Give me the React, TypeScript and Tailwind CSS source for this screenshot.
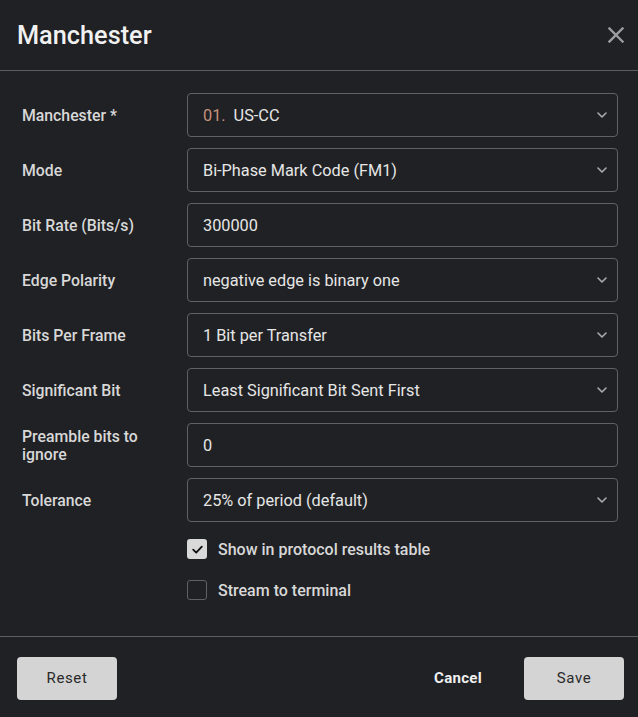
import React from "react";

const Chevron = () => (
  <svg width="10" height="6" viewBox="0 0 10 6" className="shrink-0">
    <path d="M1 1l4 4 4-4" fill="none" stroke="#a9abae" strokeWidth="1.6" strokeLinecap="round" strokeLinejoin="round" />
  </svg>
);

type Row = { label: React.ReactNode; value: React.ReactNode; select: boolean };

const rows: Row[] = [
  {
    label: "Manchester *",
    value: (
      <>
        <span className="text-[#c8917c] mr-[8px]">01.</span>US-CC
      </>
    ),
    select: true,
  },
  { label: "Mode", value: "Bi-Phase Mark Code (FM1)", select: true },
  { label: "Bit Rate (Bits/s)", value: "300000", select: false },
  { label: "Edge Polarity", value: "negative edge is binary one", select: true },
  { label: "Bits Per Frame", value: "1 Bit per Transfer", select: true },
  { label: "Significant Bit", value: "Least Significant Bit Sent First", select: true },
  { label: "Preamble bits to ignore", value: "0", select: false },
  { label: "Tolerance", value: "25% of period (default)", select: true },
];

export default function App() {
  return (
    <div
      className="w-[638px] h-[717px] bg-[#202124] flex flex-col text-[#e3e3e3]"
      style={{ fontFamily: "Roboto, 'Noto Sans', sans-serif" }}
    >
      <div className="h-[71px] shrink-0 flex items-center justify-between pl-[17px] pr-[14px] border-b border-[#5c5e62]">
        <div className="text-[25.3px] font-medium text-[#f1f1f1] leading-none mt-[1px]">Manchester</div>
        <svg width="16" height="16" viewBox="0 0 16 16" className="mt-[-1px]">
          <path d="M1.5 1.5l13 13M14.5 1.5l-13 13" stroke="#9c9da0" strokeWidth="2.4" strokeLinecap="square" />
        </svg>
      </div>
      <div className="flex-1 flex flex-col pt-[22px] pl-[22px] pr-[20px]">
        <div className="flex flex-col gap-[11px]">
          {rows.map((r, i) => (
            <div key={i} className="flex items-center">
              <div className="w-[150px] mr-[15px] text-[15.8px] font-medium leading-[18px] text-[#d8d8d8] mt-[1px]">{r.label}</div>
              <div className="flex-1 h-[44px] border border-[#5f6165] rounded-[4px] flex items-center justify-between pl-[15px] pr-[10px] text-[16.3px] text-[#e6e6e6]">
                <span className="mt-[2px]">{r.value}</span>
                {r.select && <Chevron />}
              </div>
            </div>
          ))}
        </div>
        <div className="pl-[165px] mt-[17px] flex flex-col gap-[21px]">
          <div className="flex items-center gap-[11px] h-[20px]">
            <div className="w-[20px] h-[20px] rounded-[3px] bg-[#d9d9d9] flex items-center justify-center">
              <svg width="11" height="9" viewBox="0 0 11 9">
                <path d="M1.2 4.6l3 3 5.6-6" fill="none" stroke="#111" strokeWidth="1.8" strokeLinecap="round" strokeLinejoin="round" />
              </svg>
            </div>
            <span className="text-[16px] font-medium leading-[20px] text-[#d8d8d8] mt-[1px]">Show in protocol results table</span>
          </div>
          <div className="flex items-center gap-[11px] h-[20px]">
            <div className="w-[20px] h-[20px] rounded-[3px] border border-[#5f6165]" />
            <span className="text-[16px] font-medium leading-[20px] text-[#d8d8d8] mt-[1px]">Stream to terminal</span>
          </div>
        </div>
      </div>
      <div className="h-[81px] shrink-0 border-t border-[#5c5e62] flex items-start justify-between pl-[17px] pr-[14px] pt-[20px]">
        <button className="w-[100px] h-[43px] rounded-[4px] bg-[#d4d4d4] text-[#2a2a2a] text-[15px] font-normal tracking-[0.6px]">
          Reset
        </button>
        <div className="flex items-center gap-[42px]">
          <span className="text-[15px] font-bold text-[#f0f0f0] tracking-[0.3px]">Cancel</span>
          <button className="w-[100px] h-[43px] rounded-[4px] bg-[#d4d4d4] text-[#2a2a2a] text-[15px] font-normal tracking-[0.6px]">
            Save
          </button>
        </div>
      </div>
    </div>
  );
}
